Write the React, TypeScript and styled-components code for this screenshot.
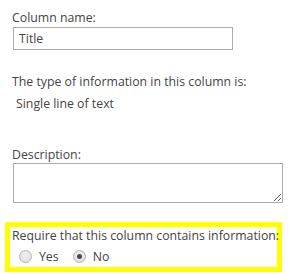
import React, { useState } from 'react'
import styled, { createGlobalStyle } from 'styled-components'

const GlobalStyle = createGlobalStyle`
  html, body {
    margin: 0;
    padding: 0;
    background: #fff;
  }
  body {
    font-family: "Open Sans", "Noto Sans", "Liberation Sans", sans-serif;
    font-size: 12.3px;
    color: #444;
  }
`

const Page = styled.div`
  display: flex;
  flex-direction: column;
  align-items: flex-start;
  padding: 9px 0 0 12px;
`

const Label = styled.div<{ $gap?: number; $indent?: number }>`
  line-height: 17px;
  margin-top: ${p => p.$gap ?? 0}px;
  padding-left: ${p => p.$indent ?? 0}px;
  white-space: nowrap;
`

const TextInput = styled.input`
  box-sizing: border-box;
  width: 220px;
  height: 23px;
  margin: 1px 0 0 1px;
  padding: 0 5px;
  border: 1px solid #ababab;
  font: inherit;
  color: #444;
  outline: none;
`

const TextArea = styled.textarea`
  box-sizing: border-box;
  width: 270px;
  height: 40px;
  margin: 0 0 0 1px;
  padding: 3px 5px;
  border: 1px solid #ababab;
  font: inherit;
  color: #444;
  outline: none;
  display: block;
`

const Highlight = styled.div`
  box-sizing: border-box;
  width: 277px;
  height: 50px;
  margin: 19px 0 0 -7px;
  border: 5px solid #ffff00;
  padding: 0 0 0 2px;
  display: flex;
  flex-direction: column;
`

const RadioRow = styled.div`
  display: flex;
  align-items: center;
  gap: 14px;
  padding: 4px 0 0 7px;
`

const Option = styled.label`
  display: flex;
  align-items: center;
  gap: 7px;
  line-height: 17px;
  cursor: pointer;
`

const Radio = styled.input.attrs({ type: 'radio' })`
  appearance: none;
  -webkit-appearance: none;
  box-sizing: border-box;
  width: 13px;
  height: 13px;
  margin: 0;
  border-radius: 50%;
  border: 1px solid #b4b4b4;
  background: radial-gradient(circle at 50% 40%, #f0f0f0 0%, #dcdcdc 100%);
  position: relative;
  &:checked::after {
    content: '';
    position: absolute;
    left: 3px;
    top: 3px;
    width: 5px;
    height: 5px;
    border-radius: 50%;
    background: #4a4a4a;
  }
`

export default function App() {
  const [required, setRequired] = useState('no')
  return (
    <>
      <GlobalStyle />
      <Page>
        <Label>Column name:</Label>
        <TextInput defaultValue="Title" />
        <Label $gap={23}>The type of information in this column is:</Label>
        <Label $gap={5} $indent={4}>Single line of text</Label>
        <Label $gap={34}>Description:</Label>
        <TextArea />
        <Highlight>
          <Label>Require that this column contains information:</Label>
          <RadioRow>
            <Option>
              <Radio name="req" checked={required === 'yes'} onChange={() => setRequired('yes')} />
              Yes
            </Option>
            <Option>
              <Radio name="req" checked={required === 'no'} onChange={() => setRequired('no')} />
              No
            </Option>
          </RadioRow>
        </Highlight>
      </Page>
    </>
  )
}
